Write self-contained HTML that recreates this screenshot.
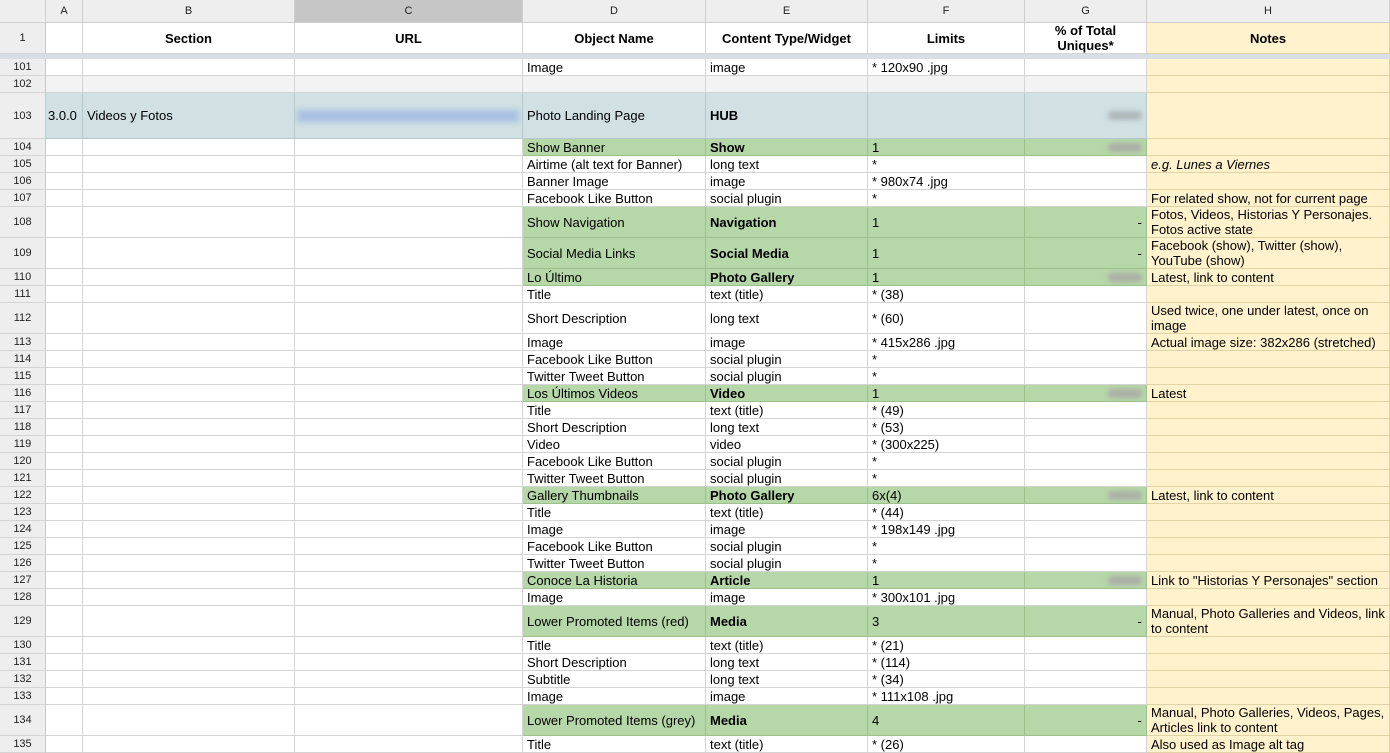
<!DOCTYPE html>
<html><head><meta charset="utf-8"><style>
*{margin:0;padding:0}
body{width:1390px;height:746px;overflow:hidden;background:#fff;font-family:"Liberation Sans",Arial,sans-serif;font-size:13px;color:#000}
.r{display:flex;height:17px}
.c{box-sizing:border-box;border-right:1px solid #d4d4d4;border-bottom:1px solid #d4d4d4;padding:0 4px;display:flex;align-items:center;overflow:hidden;white-space:nowrap;flex:none}
.n{width:46px;background:#eeeeee;justify-content:center;font-size:11px;color:#222;border-right-color:#c8c8c8}
.a{width:37px}.b{width:212px}.cc{width:228px}.d{width:183px}.e{width:162px}.f{width:157px}.g{width:122px;justify-content:flex-end}
.h{width:243px;background:#fff2cc;border-color:#e2d3a4;white-space:normal;line-height:15px}
.gr{background:#b6d7a8;border-color:#9cc08b}
.e.gr{font-weight:bold}
.bl{display:inline-block;width:34px;height:9px;background:#aab0a6;filter:blur(2.5px);border-radius:4px}
.gy{background:#f3f3f3}
.bu{background:#d0e0e3;border-color:#b5c8cb}
.hd .c{background:#eeeeee;justify-content:center;font-size:11px;color:#222;border-color:#cfcfcf}
.t .c{justify-content:center;font-weight:bold;text-align:center;line-height:15px;white-space:normal}
</style></head><body>
<div class="r hd" style="height:23px"><div class="c n"></div><div class="c a">A</div><div class="c b">B</div><div class="c cc" style="background:#c6c6c6">C</div><div class="c d">D</div><div class="c e">E</div><div class="c f">F</div><div class="c g" style="justify-content:center">G</div><div class="c h" style="background:#eee;border-color:#cfcfcf;justify-content:center">H</div></div>
<div class="r t" style="height:31px"><div class="c n" style="font-weight:normal">1</div><div class="c a"></div><div class="c b">Section</div><div class="c cc">URL</div><div class="c d">Object Name</div><div class="c e">Content Type/Widget</div><div class="c f">Limits</div><div class="c g" style="justify-content:center;padding:0 20px">% of Total Uniques*</div><div class="c h">Notes</div></div>
<div style="height:5px;background:#d9dee6"></div>
<div class="r"><div class="c n">101</div><div class="c a"></div><div class="c b"></div><div class="c cc"></div><div class="c d">Image</div><div class="c e">image</div><div class="c f">* 120x90 .jpg</div><div class="c g"></div><div class="c h"></div></div>
<div class="r"><div class="c n">102</div><div class="c a gy"></div><div class="c b gy"></div><div class="c cc gy"></div><div class="c d gy"></div><div class="c e gy"></div><div class="c f gy"></div><div class="c g gy"></div><div class="c h"></div></div>
<div class="r" style="height:46px"><div class="c n">103</div><div class="c a bu" style="padding:0 2px">3.0.0</div><div class="c b bu">Videos y Fotos</div><div class="c cc bu" style="padding:0 2px"><span style="display:block;width:222px;height:12px;background:#a9c0e2;filter:blur(3px)"></span></div><div class="c d bu">Photo Landing Page</div><div class="c e bu" style="font-weight:bold">HUB</div><div class="c f bu"></div><div class="c g bu"><span class="bl" style="background:#b0b8ba"></span></div><div class="c h"></div></div>
<div class="r"><div class="c n">104</div><div class="c a"></div><div class="c b"></div><div class="c cc"></div><div class="c d gr">Show Banner</div><div class="c e gr">Show</div><div class="c f gr">1</div><div class="c g gr"><span class="bl"></span></div><div class="c h"></div></div>
<div class="r"><div class="c n">105</div><div class="c a"></div><div class="c b"></div><div class="c cc"></div><div class="c d">Airtime (alt text for Banner)</div><div class="c e">long text</div><div class="c f">*</div><div class="c g"></div><div class="c h" style="font-style:italic">e.g. Lunes a Viernes</div></div>
<div class="r"><div class="c n">106</div><div class="c a"></div><div class="c b"></div><div class="c cc"></div><div class="c d">Banner Image</div><div class="c e">image</div><div class="c f">* 980x74 .jpg</div><div class="c g"></div><div class="c h"></div></div>
<div class="r"><div class="c n">107</div><div class="c a"></div><div class="c b"></div><div class="c cc"></div><div class="c d">Facebook Like Button</div><div class="c e">social plugin</div><div class="c f">*</div><div class="c g"></div><div class="c h">For related show, not for current page</div></div>
<div class="r" style="height:31px"><div class="c n">108</div><div class="c a"></div><div class="c b"></div><div class="c cc"></div><div class="c d gr">Show Navigation</div><div class="c e gr">Navigation</div><div class="c f gr">1</div><div class="c g gr">-</div><div class="c h">Fotos, Videos, Historias Y Personajes. Fotos active state</div></div>
<div class="r" style="height:31px"><div class="c n">109</div><div class="c a"></div><div class="c b"></div><div class="c cc"></div><div class="c d gr">Social Media Links</div><div class="c e gr">Social Media</div><div class="c f gr">1</div><div class="c g gr">-</div><div class="c h">Facebook (show), Twitter (show), YouTube (show)</div></div>
<div class="r"><div class="c n">110</div><div class="c a"></div><div class="c b"></div><div class="c cc"></div><div class="c d gr">Lo Último</div><div class="c e gr">Photo Gallery</div><div class="c f gr">1</div><div class="c g gr"><span class="bl"></span></div><div class="c h">Latest, link to content</div></div>
<div class="r"><div class="c n">111</div><div class="c a"></div><div class="c b"></div><div class="c cc"></div><div class="c d">Title</div><div class="c e">text (title)</div><div class="c f">* (38)</div><div class="c g"></div><div class="c h"></div></div>
<div class="r" style="height:31px"><div class="c n">112</div><div class="c a"></div><div class="c b"></div><div class="c cc"></div><div class="c d">Short Description</div><div class="c e">long text</div><div class="c f">* (60)</div><div class="c g"></div><div class="c h">Used twice, one under latest, once on image</div></div>
<div class="r"><div class="c n">113</div><div class="c a"></div><div class="c b"></div><div class="c cc"></div><div class="c d">Image</div><div class="c e">image</div><div class="c f">* 415x286 .jpg</div><div class="c g"></div><div class="c h">Actual image size: 382x286 (stretched)</div></div>
<div class="r"><div class="c n">114</div><div class="c a"></div><div class="c b"></div><div class="c cc"></div><div class="c d">Facebook Like Button</div><div class="c e">social plugin</div><div class="c f">*</div><div class="c g"></div><div class="c h"></div></div>
<div class="r"><div class="c n">115</div><div class="c a"></div><div class="c b"></div><div class="c cc"></div><div class="c d">Twitter Tweet Button</div><div class="c e">social plugin</div><div class="c f">*</div><div class="c g"></div><div class="c h"></div></div>
<div class="r"><div class="c n">116</div><div class="c a"></div><div class="c b"></div><div class="c cc"></div><div class="c d gr">Los Últimos Videos</div><div class="c e gr">Video</div><div class="c f gr">1</div><div class="c g gr"><span class="bl"></span></div><div class="c h">Latest</div></div>
<div class="r"><div class="c n">117</div><div class="c a"></div><div class="c b"></div><div class="c cc"></div><div class="c d">Title</div><div class="c e">text (title)</div><div class="c f">* (49)</div><div class="c g"></div><div class="c h"></div></div>
<div class="r"><div class="c n">118</div><div class="c a"></div><div class="c b"></div><div class="c cc"></div><div class="c d">Short Description</div><div class="c e">long text</div><div class="c f">* (53)</div><div class="c g"></div><div class="c h"></div></div>
<div class="r"><div class="c n">119</div><div class="c a"></div><div class="c b"></div><div class="c cc"></div><div class="c d">Video</div><div class="c e">video</div><div class="c f">* (300x225)</div><div class="c g"></div><div class="c h"></div></div>
<div class="r"><div class="c n">120</div><div class="c a"></div><div class="c b"></div><div class="c cc"></div><div class="c d">Facebook Like Button</div><div class="c e">social plugin</div><div class="c f">*</div><div class="c g"></div><div class="c h"></div></div>
<div class="r"><div class="c n">121</div><div class="c a"></div><div class="c b"></div><div class="c cc"></div><div class="c d">Twitter Tweet Button</div><div class="c e">social plugin</div><div class="c f">*</div><div class="c g"></div><div class="c h"></div></div>
<div class="r"><div class="c n">122</div><div class="c a"></div><div class="c b"></div><div class="c cc"></div><div class="c d gr">Gallery Thumbnails</div><div class="c e gr">Photo Gallery</div><div class="c f gr">6x(4)</div><div class="c g gr"><span class="bl"></span></div><div class="c h">Latest, link to content</div></div>
<div class="r"><div class="c n">123</div><div class="c a"></div><div class="c b"></div><div class="c cc"></div><div class="c d">Title</div><div class="c e">text (title)</div><div class="c f">* (44)</div><div class="c g"></div><div class="c h"></div></div>
<div class="r"><div class="c n">124</div><div class="c a"></div><div class="c b"></div><div class="c cc"></div><div class="c d">Image</div><div class="c e">image</div><div class="c f">* 198x149 .jpg</div><div class="c g"></div><div class="c h"></div></div>
<div class="r"><div class="c n">125</div><div class="c a"></div><div class="c b"></div><div class="c cc"></div><div class="c d">Facebook Like Button</div><div class="c e">social plugin</div><div class="c f">*</div><div class="c g"></div><div class="c h"></div></div>
<div class="r"><div class="c n">126</div><div class="c a"></div><div class="c b"></div><div class="c cc"></div><div class="c d">Twitter Tweet Button</div><div class="c e">social plugin</div><div class="c f">*</div><div class="c g"></div><div class="c h"></div></div>
<div class="r"><div class="c n">127</div><div class="c a"></div><div class="c b"></div><div class="c cc"></div><div class="c d gr">Conoce La Historia</div><div class="c e gr">Article</div><div class="c f gr">1</div><div class="c g gr"><span class="bl"></span></div><div class="c h" style="white-space:nowrap">Link to "Historias Y Personajes" section</div></div>
<div class="r"><div class="c n">128</div><div class="c a"></div><div class="c b"></div><div class="c cc"></div><div class="c d">Image</div><div class="c e">image</div><div class="c f">* 300x101 .jpg</div><div class="c g"></div><div class="c h"></div></div>
<div class="r" style="height:31px"><div class="c n">129</div><div class="c a"></div><div class="c b"></div><div class="c cc"></div><div class="c d gr">Lower Promoted Items (red)</div><div class="c e gr">Media</div><div class="c f gr">3</div><div class="c g gr">-</div><div class="c h">Manual, Photo Galleries and Videos, link to content</div></div>
<div class="r"><div class="c n">130</div><div class="c a"></div><div class="c b"></div><div class="c cc"></div><div class="c d">Title</div><div class="c e">text (title)</div><div class="c f">* (21)</div><div class="c g"></div><div class="c h"></div></div>
<div class="r"><div class="c n">131</div><div class="c a"></div><div class="c b"></div><div class="c cc"></div><div class="c d">Short Description</div><div class="c e">long text</div><div class="c f">* (114)</div><div class="c g"></div><div class="c h"></div></div>
<div class="r"><div class="c n">132</div><div class="c a"></div><div class="c b"></div><div class="c cc"></div><div class="c d">Subtitle</div><div class="c e">long text</div><div class="c f">* (34)</div><div class="c g"></div><div class="c h"></div></div>
<div class="r"><div class="c n">133</div><div class="c a"></div><div class="c b"></div><div class="c cc"></div><div class="c d">Image</div><div class="c e">image</div><div class="c f">* 111x108 .jpg</div><div class="c g"></div><div class="c h"></div></div>
<div class="r" style="height:31px"><div class="c n">134</div><div class="c a"></div><div class="c b"></div><div class="c cc"></div><div class="c d gr">Lower Promoted Items (grey)</div><div class="c e gr">Media</div><div class="c f gr">4</div><div class="c g gr">-</div><div class="c h">Manual, Photo Galleries, Videos, Pages, Articles link to content</div></div>
<div class="r"><div class="c n">135</div><div class="c a"></div><div class="c b"></div><div class="c cc"></div><div class="c d">Title</div><div class="c e">text (title)</div><div class="c f">* (26)</div><div class="c g"></div><div class="c h">Also used as Image alt tag</div></div>
</body></html>
